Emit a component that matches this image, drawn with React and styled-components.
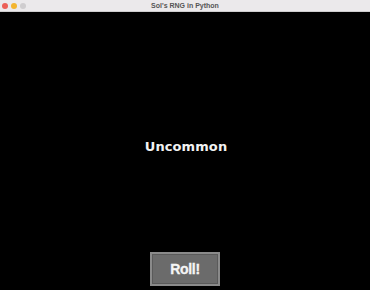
import React from "react";
import styled, { createGlobalStyle } from "styled-components";

const Global = createGlobalStyle`
  html, body { margin: 0; padding: 0; background: #000; }
  #root { width: 370px; height: 290px; }
`;

const Window = styled.div`
  width: 370px;
  height: 290px;
  display: flex;
  flex-direction: column;
  background: #000;
  overflow: hidden;
`;

const TitleBar = styled.div`
  height: 12px;
  flex: none;
  display: grid;
  grid-template-columns: 40px 1fr 40px;
  align-items: center;
  background: #ebe9eb;
  border-bottom: 1px solid #cfcdcf;
  box-sizing: border-box;
`;

const Lights = styled.div`
  display: flex;
  gap: 3px;
  padding-left: 2px;
`;

const Light = styled.span`
  width: 6px;
  height: 6px;
  border-radius: 50%;
  background: ${(p) => p.$c};
`;

const Title = styled.div`
  text-align: center;
  font-family: "Liberation Sans", Arial, sans-serif;
  font-weight: bold;
  font-size: 7px;
  color: #555;
  line-height: 12px;
`;

const Content = styled.div`
  flex: 1;
  display: flex;
  flex-direction: column;
  align-items: center;
  padding-top: 127px;
  box-sizing: border-box;
`;

const Rarity = styled.div`
  font-family: "DejaVu Sans", sans-serif;
  font-weight: bold;
  font-size: 13px;
  line-height: 16px;
  letter-spacing: 0.1px;
  color: #f2f2f2;
  padding-left: 2px;
`;

const RollButton = styled.button`
  margin-top: auto;
  margin-bottom: 4px;
  width: 70px;
  height: 34px;
  background: #6b6b6b;
  border: 2px solid #8a8a8a;
  box-shadow: inset 0 0 0 1px #5a5a5a;
  color: #f5f5f5;
  font-family: "Liberation Sans", Arial, sans-serif;
  font-weight: bold;
  font-size: 14px;
  letter-spacing: -0.3px;
  -webkit-text-stroke: 0.3px #f5f5f5;
  padding: 0;
  cursor: pointer;
`;

export default function App() {
  return (
    <>
      <Global />
      <Window>
        <TitleBar>
          <Lights>
            <Light $c="#ec5f57" />
            <Light $c="#f3b52f" />
            <Light $c="#cfcdcf" />
          </Lights>
          <Title>Sol's RNG in Python</Title>
          <span />
        </TitleBar>
        <Content>
          <Rarity>Uncommon</Rarity>
          <RollButton>Roll!</RollButton>
        </Content>
      </Window>
    </>
  );
}
